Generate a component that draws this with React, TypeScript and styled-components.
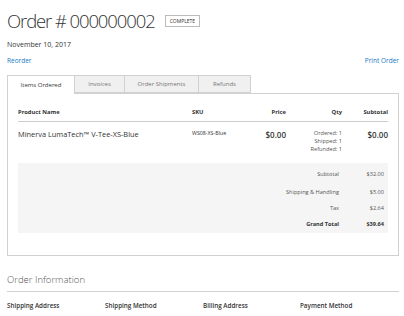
import React from 'react'
import styled, { createGlobalStyle } from 'styled-components'

const GlobalStyle = createGlobalStyle`
  html, body {
    margin: 0;
    padding: 0;
    background: #fff;
    font-family: 'Open Sans', 'Liberation Sans', sans-serif;
    color: #333;
  }
`

const Page = styled.div`
  padding: 0 5px 0 7px;
`

const TitleRow = styled.div`
  display: flex;
  align-items: center;
  height: 40px;
`

const Title = styled.h1`
  margin: 0;
  font-size: 18.5px;
  font-weight: 300;
  color: #333;
  letter-spacing: -1.1px;
`

const Badge = styled.span`
  margin-left: 10px;
  margin-top: 2px;
  border: 1px solid #bbb;
  padding: 2px 4px;
  font-size: 5px;
  text-transform: uppercase;
  color: #333;
  line-height: 6px;
`

const DateLine = styled.div`
  font-size: 7px;
  height: 15px;
  line-height: 10px;
`

const LinkRow = styled.div`
  display: flex;
  justify-content: space-between;
  height: 15px;
  font-size: 6.5px;
  line-height: 12px;
`

const Link = styled.a`
  color: #1979c3;
  text-decoration: none;
`

const Tabs = styled.div`
  display: flex;
  margin-top: 5px;
  height: 19px;
`

const Tab = styled.div<{ $active?: boolean; $w: number }>`
  width: ${p => p.$w}px;
  box-sizing: border-box;
  border: 1px solid #d1d1d1;
  border-left-width: ${p => (p.$active ? 1 : 0)}px;
  border-bottom: ${p => (p.$active ? 'none' : '1px solid #d1d1d1')};
  background: ${p => (p.$active ? '#fff' : '#f0f0f0')};
  height: ${p => (p.$active ? 19 : 18)}px;
  font-size: 6px;
  color: ${p => (p.$active ? '#333' : '#777')};
  display: flex;
  align-items: center;
  justify-content: center;
  position: relative;
  z-index: ${p => (p.$active ? 1 : 0)};
`

const Box = styled.div`
  border: 1px solid #d1d1d1;
  margin-top: -1px;
  padding: 0 10px 22px 10px;
`

const Table = styled.div`
  display: grid;
  grid-template-columns: 174px 60px 34px 56px 1fr;
`

const HeadCell = styled.div<{ $right?: boolean }>`
  font-size: 5.8px;
  font-weight: 700;
  text-align: ${p => (p.$right ? 'right' : 'left')};
  padding-top: 14px;
  height: 13px;
  line-height: 9px;
  border-bottom: 1px solid #ccc;
`

const Cell = styled.div<{ $right?: boolean; $size?: number; $bold?: boolean }>`
  font-size: ${p => p.$size ?? 6}px;
  font-weight: ${p => (p.$bold ? 600 : 400)};
  text-align: ${p => (p.$right ? 'right' : 'left')};
  padding-top: 7px;
  line-height: ${p => (p.$size && p.$size > 7 ? 11 : 8)}px;
  height: 34px;
`

const QtyLine = styled.div`
  font-size: 5.6px;
  line-height: 8px;
  color: #555;
`

const Totals = styled.div`
  background: #f5f5f5;
  padding: 2px 0 0;
`

const TotalRow = styled.div<{ $h: number }>`
  display: grid;
  grid-template-columns: 1fr 45px;
  height: ${p => p.$h}px;
  align-items: center;
  padding-right: 4px;
`

const TotalLabel = styled.div<{ $bold?: boolean }>`
  text-align: right;
  font-size: 5.6px;
  font-weight: ${p => (p.$bold ? 700 : 400)};
  color: ${p => (p.$bold ? '#333' : '#555')};
`

const TotalValue = styled(TotalLabel)``

const SectionTitle = styled.div`
  margin-top: 16px;
  font-size: 9.5px;
  font-weight: 300;
  color: #555;
  height: 16px;
  line-height: 16px;
  border-bottom: 1px solid #d1d1d1;
  padding-bottom: 3px;
`

const InfoCols = styled.div`
  display: grid;
  grid-template-columns: 98px 98px 97px 1fr;
  padding-top: 9px;
`

const InfoHead = styled.div`
  font-size: 6.3px;
  font-weight: 600;
  line-height: 10px;
`

export default function App() {
  return (
    <>
      <GlobalStyle />
      <Page>
        <TitleRow>
          <Title>Order # 000000002</Title>
          <Badge>Complete</Badge>
        </TitleRow>
        <DateLine>November 10, 2017</DateLine>
        <LinkRow>
          <Link href="#">Reorder</Link>
          <Link href="#">Print Order</Link>
        </LinkRow>
        <Tabs>
          <Tab $active $w={68}>Items Ordered</Tab>
          <Tab $w={50}>Invoices</Tab>
          <Tab $w={74}>Order Shipments</Tab>
          <Tab $w={52}>Refunds</Tab>
        </Tabs>
        <Box>
          <Table>
            <HeadCell>Product Name</HeadCell>
            <HeadCell>SKU</HeadCell>
            <HeadCell $right>Price</HeadCell>
            <HeadCell $right>Qty</HeadCell>
            <HeadCell $right>Subtotal</HeadCell>
            <Cell $size={7.4}>Minerva LumaTech™ V-Tee-XS-Blue</Cell>
            <Cell $size={5.3}>WS08-XS-Blue</Cell>
            <Cell $right $size={8} $bold>$0.00</Cell>
            <Cell $right>
              <QtyLine>Ordered: 1</QtyLine>
              <QtyLine>Shipped: 1</QtyLine>
              <QtyLine>Refunded: 1</QtyLine>
            </Cell>
            <Cell $right $size={8} $bold>$0.00</Cell>
          </Table>
          <Totals>
            <TotalRow $h={18}>
              <TotalLabel>Subtotal</TotalLabel>
              <TotalValue>$32.00</TotalValue>
            </TotalRow>
            <TotalRow $h={18}>
              <TotalLabel>Shipping &amp; Handling</TotalLabel>
              <TotalValue>$5.00</TotalValue>
            </TotalRow>
            <TotalRow $h={14}>
              <TotalLabel>Tax</TotalLabel>
              <TotalValue>$2.64</TotalValue>
            </TotalRow>
            <TotalRow $h={18}>
              <TotalLabel $bold>Grand Total</TotalLabel>
              <TotalValue $bold>$39.64</TotalValue>
            </TotalRow>
          </Totals>
        </Box>
        <SectionTitle>Order Information</SectionTitle>
        <InfoCols>
          <InfoHead>Shipping Address</InfoHead>
          <InfoHead>Shipping Method</InfoHead>
          <InfoHead>Billing Address</InfoHead>
          <InfoHead>Payment Method</InfoHead>
        </InfoCols>
      </Page>
    </>
  )
}
